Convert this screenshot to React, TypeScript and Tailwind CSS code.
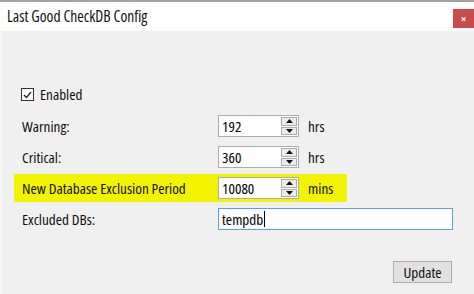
import React from 'react';

const font = "font-['Open_Sans','Noto_Sans',sans-serif] [font-stretch:84%]";

const Spinner: React.FC = () => (
  <div className="flex h-full w-[17px] flex-col gap-[1px] py-[1px] pr-[1px]">
    <div className="flex flex-1 items-center justify-center border border-[#acacac] bg-[#ececec]">
      <svg width="7" height="4" viewBox="0 0 7 4">
        <path d="M0 4 L3.5 0 L7 4 Z" fill="#111" />
      </svg>
    </div>
    <div className="flex flex-1 items-center justify-center border border-[#acacac] bg-[#ececec]">
      <svg width="7" height="4" viewBox="0 0 7 4">
        <path d="M0 0 L7 0 L3.5 4 Z" fill="#111" />
      </svg>
    </div>
  </div>
);

const NumberField: React.FC<{ value: string; unit: string }> = ({ value, unit }) => (
  <div className="flex items-center">
    <div className="flex h-[22px] w-[81px] items-center border border-[#abadb3] bg-white">
      <span className="flex-1 pl-[3px] text-black">{value}</span>
      <Spinner />
    </div>
    <span className="ml-[9px]">{unit}</span>
  </div>
);

const App: React.FC = () => {
  return (
    <div className={`flex h-[294px] w-[474px] flex-col overflow-hidden bg-white ${font}`}>
      {/* title bar */}
      <div className="relative flex h-[31px] w-full items-start border-t-2 border-[#a3a3a3] bg-white">
        <span className="mt-[3px] ml-[7px] text-[15.6px] text-[#111]">Last Good CheckDB Config</span>
        <div className="absolute top-[7px] right-0 flex h-[19px] w-[21px] items-center justify-center bg-[#c94c4c]">
          <span className="text-[11px] font-bold leading-none text-white">×</span>
        </div>
      </div>

      {/* body */}
      <div className="flex flex-1 flex-col border-l-2 border-[#f8f8f8] bg-[#f0f0f0] text-[15.2px] leading-tight text-[#111]">
        <div className="mt-[57px] flex h-[13px] items-center pl-[19px]">
          <div className="flex h-[13px] w-[13px] items-center justify-center border border-[#333] bg-white">
            <svg width="9" height="8" viewBox="0 0 9 8">
              <path d="M1 4 L3.5 6.5 L8 1" stroke="#222" strokeWidth="1.3" fill="none" />
            </svg>
          </div>
          <span className="ml-[6px]">Enabled</span>
        </div>

        <div className="mt-[14px] flex flex-col gap-[9px]">
          <div className="flex h-[22px] items-center pl-[20px]">
            <span className="w-[196px]">Warning:</span>
            <NumberField value="192" unit="hrs" />
          </div>
          <div className="flex h-[22px] items-center pl-[20px]">
            <span className="w-[196px]">Critical:</span>
            <NumberField value="360" unit="hrs" />
          </div>
          <div className="-my-[3px] ml-[12px] flex h-[28px] w-[333px] items-center bg-[#f3f300] pl-[8px]">
            <span className="w-[196px]">New Database Exclusion Period</span>
            <NumberField value="10080" unit="mins" />
          </div>
          <div className="flex h-[22px] items-center pl-[20px]">
            <span className="w-[196px]">Excluded DBs:</span>
            <div className="flex h-[22px] w-[235px] items-center border border-[#5a9ee0] bg-white pl-[3px]">
              <span className="text-black">tempdb</span>
              <span className="ml-[1px] h-[16px] w-[1px] bg-black" />
            </div>
          </div>
        </div>

        <div className="mt-[31px] flex justify-end pr-[22px]">
          <button className="flex h-[22px] w-[59px] items-center justify-center border border-[#adadad] bg-[#e1e1e1]">
            Update
          </button>
        </div>
      </div>
    </div>
  );
};

export default App;
